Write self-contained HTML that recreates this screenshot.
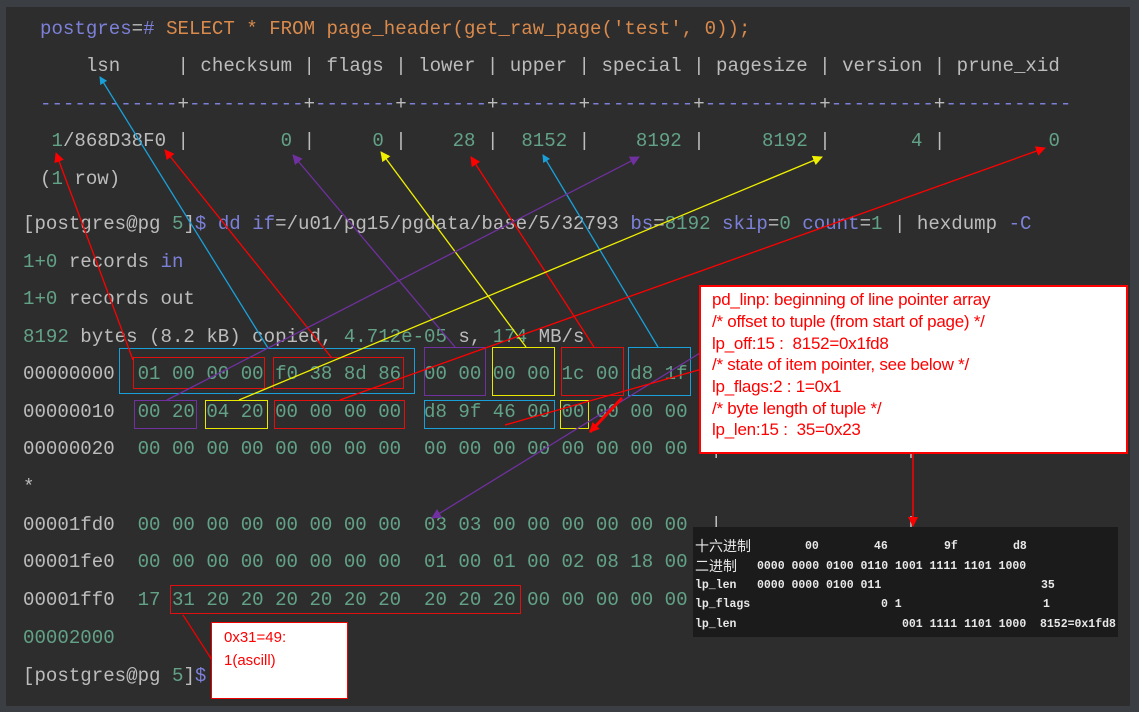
<!DOCTYPE html>
<html><head><meta charset="utf-8"><style>
*{margin:0;padding:0;box-sizing:border-box}
body{width:1139px;height:712px;background:#3b3e42;position:relative;overflow:hidden;font-family:"Liberation Mono",monospace}
#panel{position:absolute;left:6px;top:7px;width:1124px;height:699px;background:#2d2d2d}
.l{position:absolute;white-space:pre;font-size:19.1px;line-height:22px;color:#bcbcbc}
.g{color:#62a287}.p{color:#7c80d8}.o{color:#d98a4c}
.bx{position:absolute;border:1.2px solid}
.c{border-color:#1aa0d8}.r{border-color:#e01010}.v{border-color:#7030a0}.y{border-color:#e8e800}
#ann{position:absolute;left:699px;top:285px;width:429px;height:169px;background:#fff;border:2px solid #f00;font-family:"Liberation Sans",sans-serif;color:#f00;font-size:17px;letter-spacing:-0.25px}
#ann div{position:absolute;left:11px;white-space:pre}
#note{position:absolute;left:211px;top:622px;width:137px;height:77px;background:#fff;border:1.5px solid #e00;font-family:"Liberation Sans",sans-serif;color:#f00;font-size:15px}
#blk{position:absolute;left:693px;top:527px;width:425px;height:110px;background:#1b1b1b;color:#e8e8e8;font-size:11.5px;font-weight:bold}
#blk span{position:absolute;white-space:pre;line-height:14px}
.cj{font-family:"Liberation Sans","Noto Sans CJK SC",sans-serif;font-weight:normal;font-size:14px}
</style></head><body>
<div id="panel"></div>

<div class="l" style="left:40px;top:18px"><span class="p">postgres</span>=<span class="p">#</span> <span class="o">SELECT * FROM page_header(get_raw_page('test', 0));</span></div>
<div class="l" style="left:40px;top:55px">    lsn     | checksum | flags | lower | upper | special | pagesize | version | prune_xid</div>
<div class="l p" style="left:40px;top:93px">------------<span style="color:#bcbcbc">+</span>----------<span style="color:#bcbcbc">+</span>-------<span style="color:#bcbcbc">+</span>-------<span style="color:#bcbcbc">+</span>-------<span style="color:#bcbcbc">+</span>---------<span style="color:#bcbcbc">+</span>----------<span style="color:#bcbcbc">+</span>---------<span style="color:#bcbcbc">+</span>-----------</div>
<div class="l" style="left:40px;top:130px"> <span class="g">1</span>/868D38F0 |        <span class="g">0</span> |     <span class="g">0</span> |    <span class="g">28</span> |  <span class="g">8152</span> |    <span class="g">8192</span> |     <span class="g">8192</span> |       <span class="g">4</span> |         <span class="g">0</span></div>
<div class="l" style="left:40px;top:168px">(<span class="g">1</span> row)</div>
<div class="l" style="left:23px;top:213px">[postgres@pg <span class="g">5</span>]<span class="p">$ dd if</span>=/u01/pg15/pgdata/base/5/32793 <span class="p">bs</span>=<span class="g">8192</span> <span class="p">skip</span>=<span class="g">0</span> <span class="p">count</span>=<span class="g">1</span> | hexdump <span class="p">-C</span></div>
<div class="l" style="left:23px;top:251px"><span class="g">1+0</span> records <span class="p">in</span></div>
<div class="l" style="left:23px;top:288px"><span class="g">1+0</span> records out</div>
<div class="l" style="left:23px;top:326px"><span class="g">8192</span> bytes (8.2 kB) copied, <span class="g">4.712e-05</span> s, <span class="g">174</span> MB/s</div>
<div class="l" style="left:23px;top:363px">00000000  <span class="g">01 00 00 00 f0 38 8d 86  00 00 00 00 1c 00 d8 1f</span>  |...............|</div>
<div class="l" style="left:23px;top:401px">00000010  <span class="g">00 20 04 20 00 00 00 00  d8 9f 46 00 00 00 00 00</span>  |.... ...........|</div>
<div class="l" style="left:23px;top:438px">00000020  <span class="g">00 00 00 00 00 00 00 00  00 00 00 00 00 00 00 00</span>  |................|</div>
<div class="l" style="left:23px;top:476px">*</div>
<div class="l" style="left:23px;top:514px">00001fd0  <span class="g">00 00 00 00 00 00 00 00  03 03 00 00 00 00 00 00</span>  |                |</div>
<div class="l" style="left:23px;top:551px">00001fe0  <span class="g">00 00 00 00 00 00 00 00  01 00 01 00 02 08 18 00</span></div>
<div class="l" style="left:23px;top:589px">00001ff0  <span class="g">17 31 20 20 20 20 20 20  20 20 20 00 00 00 00 00</span></div>
<div class="l g" style="left:23px;top:627px">00002000</div>
<div class="l" style="left:23px;top:665px">[postgres@pg <span class="g">5</span>]<span class="p">$</span></div>

<div class="bx c" style="left:119px;top:348px;width:296px;height:46px"></div>
<div class="bx r" style="left:133px;top:357px;width:132px;height:32px"></div>
<div class="bx r" style="left:273px;top:357px;width:131px;height:32px"></div>
<div class="bx v" style="left:424px;top:347px;width:62px;height:49px"></div>
<div class="bx y" style="left:492px;top:347px;width:63px;height:49px"></div>
<div class="bx r" style="left:561px;top:347px;width:63px;height:49px"></div>
<div class="bx c" style="left:628px;top:347px;width:63px;height:49px"></div>
<div class="bx v" style="left:134px;top:400px;width:63px;height:29px"></div>
<div class="bx y" style="left:205px;top:400px;width:63px;height:29px"></div>
<div class="bx r" style="left:274px;top:400px;width:131px;height:29px"></div>
<div class="bx c" style="left:424px;top:400px;width:131px;height:29px"></div>
<div class="bx y" style="left:560px;top:400px;width:29px;height:29px"></div>
<div class="bx r" style="left:170px;top:585px;width:351px;height:29px"></div>

<svg style="position:absolute;left:0;top:0" width="1139" height="712">
<defs>
<marker id="mc" markerWidth="8" markerHeight="8" refX="7" refY="4" orient="auto" markerUnits="userSpaceOnUse"><path d="M0,0L8,4L0,8z" fill="#1aa0d8"/></marker>
<marker id="mr" markerWidth="10" markerHeight="10" refX="9" refY="5" orient="auto" markerUnits="userSpaceOnUse"><path d="M0,0L10,5L0,10z" fill="#f00"/></marker>
<marker id="mv" markerWidth="10" markerHeight="10" refX="9" refY="5" orient="auto" markerUnits="userSpaceOnUse"><path d="M0,0L10,5L0,10z" fill="#7030a0"/></marker>
<marker id="my" markerWidth="10" markerHeight="10" refX="9" refY="5" orient="auto" markerUnits="userSpaceOnUse"><path d="M0,0L10,5L0,10z" fill="#f0f000"/></marker>
</defs>
<g stroke-width="1.3" fill="none">
<line x1="268" y1="348" x2="100" y2="77" stroke="#1aa0d8" marker-end="url(#mc)"/>
<line x1="133" y1="360" x2="56" y2="153" stroke="#f00" marker-end="url(#mr)"/>
<line x1="331" y1="357" x2="165" y2="150" stroke="#f00" marker-end="url(#mr)"/>
<line x1="455" y1="347" x2="293" y2="155" stroke="#7030a0" marker-end="url(#mv)"/>
<line x1="526" y1="347" x2="381" y2="152" stroke="#f0f000" marker-end="url(#my)"/>
<line x1="594" y1="347" x2="471" y2="157" stroke="#f00" marker-end="url(#mr)"/>
<line x1="658" y1="347" x2="543" y2="155" stroke="#1aa0d8" marker-end="url(#mc)"/>
<line x1="167" y1="400" x2="639" y2="157" stroke="#7030a0" marker-end="url(#mv)"/>
<line x1="239" y1="400" x2="822" y2="157" stroke="#f0f000" marker-end="url(#my)"/>
<line x1="340" y1="400" x2="1045" y2="148" stroke="#f00" marker-end="url(#mr)"/>
<line x1="713" y1="345" x2="432" y2="518" stroke="#7030a0" marker-end="url(#mv)"/>
<line x1="702" y1="369" x2="505" y2="425" stroke="#f00"/>
<line x1="183" y1="615" x2="212" y2="660" stroke="#e00"/>
<line x1="622" y1="398" x2="590" y2="432" stroke="#f00" stroke-width="3" marker-end="url(#mr)"/>
<line x1="913" y1="454" x2="913" y2="526" stroke="#f00" stroke-width="1.5" marker-end="url(#mr)"/>
</g>
</svg>

<div id="ann">
<div style="top:3px">pd_linp: beginning of line pointer array</div>
<div style="top:25px">/* offset to tuple (from start of page) */</div>
<div style="top:47px">lp_off:15 :  8152=0x1fd8</div>
<div style="top:68px">/* state of item pointer, see below */</div>
<div style="top:90px">lp_flags:2 : 1=0x1</div>
<div style="top:112px">/* byte length of tuple */</div>
<div style="top:133px">lp_len:15 :  35=0x23</div>
</div>

<div id="note"><div style="position:absolute;left:12px;top:6px">0x31=49:</div><div style="position:absolute;left:12px;top:29px">1(ascill)</div></div>

<div id="blk">
<span class="cj" style="left:2px;top:12px">十六进制</span>
<span style="left:112px;top:13px">00</span><span style="left:181px;top:13px">46</span><span style="left:251px;top:13px">9f</span><span style="left:320px;top:13px">d8</span>
<span class="cj" style="left:2px;top:32px">二进制</span>
<span style="left:64px;top:33px">0000 0000 0100 0110 1001 1111 1101 1000</span>
<span style="left:2px;top:52px">lp_len</span><span style="left:64px;top:52px">0000 0000 0100 011</span><span style="left:348px;top:52px">35</span>
<span style="left:2px;top:71px">lp_flags</span><span style="left:188px;top:71px">0 1</span><span style="left:350px;top:71px">1</span>
<span style="left:2px;top:91px">lp_len</span><span style="left:209px;top:91px">001 1111 1101 1000</span><span style="left:347px;top:91px">8152=0x1fd8</span>
</div>
</body></html>
